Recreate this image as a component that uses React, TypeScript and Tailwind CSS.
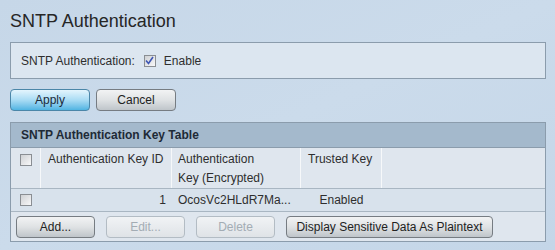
import React from "react";

const font = { fontFamily: '"Liberation Sans", Arial, sans-serif' };

const Box: React.FC<{ checked?: boolean }> = ({ checked }) => (
  <div className="w-[12px] h-[12px] border border-[#8a8e93] bg-gradient-to-br from-[#cfd1d4] to-[#f8f8f9] flex items-center justify-center">
    {checked && (
      <svg width="9" height="9" viewBox="0 0 9 9">
        <path d="M1 4.5 L3.5 7.5 L8 1" fill="none" stroke="#3d56b4" strokeWidth="1.6" />
      </svg>
    )}
  </div>
);

const Btn: React.FC<{ label: string; w: string; disabled?: boolean; primary?: boolean }> = ({ label, w, disabled, primary }) => (
  <button
    className={
      "h-[22px] rounded-[4px] border text-[12px] leading-none flex items-center justify-center " +
      w +
      (primary
        ? " border-[#4b86a8] text-[#1c2a3a] bg-gradient-to-b from-[#e4f5fd] via-[#a9dcf4] to-[#4fb4e2]"
        : disabled
        ? " border-[#b3bcc4] text-[#a3acb4] bg-gradient-to-b from-[#f1f3f5] to-[#dfe3e7]"
        : " border-[#767c82] text-[#222] bg-gradient-to-b from-[#f2f3f4] via-[#dfe2e4] to-[#bfc5ca]")
    }
  >
    {label}
  </button>
);

export default function App() {
  return (
    <div
      className="w-[555px] h-[250px] overflow-hidden bg-gradient-to-br from-[#c6d7e8] via-[#cbdbeb] to-[#c4d6e8] pl-[10px] pr-[9px] text-[#2e2e2e]"
      style={font}
    >
      <h1 className="pt-[10px] h-[42px] text-[18px] leading-[22px] text-[#262626]">SNTP Authentication</h1>

      <div className="h-[37px] border border-[#8b9cac] bg-[#dce6f0] flex items-center pl-[10px] text-[12px]">
        <span>SNTP Authentication:</span>
        <div className="ml-[9px] mr-[8px]">
          <Box checked />
        </div>
        <span>Enable</span>
      </div>

      <div className="mt-[10px] flex gap-[6px]">
        <Btn label="Apply" w="w-[80px]" primary />
        <Btn label="Cancel" w="w-[80px]" />
      </div>

      <div className="mt-[11px] border border-[#8b9cac] bg-[#dfe6ee] text-[12px]">
        <div className="h-[25px] bg-[#a4b9cc] border-b border-[#8b9cac] flex items-center pl-[10px] font-bold text-[#1e2a36]">
          SNTP Authentication Key Table
        </div>

        <div className="h-[41px] flex border-b border-[#a9b6c2]">
          <div className="w-[30px] border-r border-[#f6f8fa] flex justify-center pt-[6px]">
            <Box />
          </div>
          <div className="w-[131px] border-r border-[#f6f8fa] pl-[7px] pt-[2px] leading-[19px]">Authentication Key ID</div>
          <div className="w-[129px] border-r border-[#f6f8fa] pl-[6px] pt-[2px] leading-[19px]">
            Authentication
            <br />
            Key (Encrypted)
          </div>
          <div className="w-[81px] border-r border-[#f6f8fa] pl-[7px] pt-[2px] leading-[19px]">Trusted Key</div>
          <div className="flex-1" />
        </div>

        <div className="h-[23px] flex items-center bg-[#d8e2ec] border-b border-[#a9b6c2]">
          <div className="w-[30px] flex justify-center">
            <Box />
          </div>
          <div className="w-[131px] text-right pr-[6px]">1</div>
          <div className="w-[129px] pl-[6px]">OcosVc2HLdR7Ma...</div>
          <div className="w-[81px] text-center">Enabled</div>
        </div>

        <div className="h-[29px] flex items-center pl-[5px] gap-[11px]">
          <Btn label="Add..." w="w-[79px]" />
          <Btn label="Edit..." w="w-[79px]" disabled />
          <Btn label="Delete" w="w-[79px]" disabled />
          <Btn label="Display Sensitive Data As Plaintext" w="w-[207px]" />
        </div>
      </div>
    </div>
  );
}
